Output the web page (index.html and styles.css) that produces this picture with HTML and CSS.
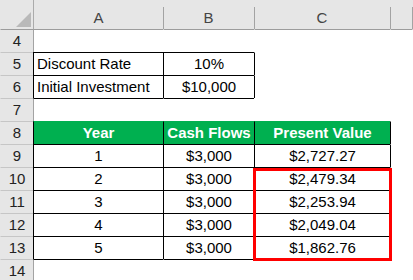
FILE: index.html
```html
<!DOCTYPE html>
<html>
<head>
<meta charset="utf-8">
<link rel="stylesheet" href="styles.css">
</head>
<body>
<div class="sheet">
  <!-- header -->
  <div class="c corner"><svg width="15" height="15" viewBox="0 0 15 15"><polygon points="15,0 15,15 0,15" fill="#b9b9b9"/></svg></div>
  <div class="c hd hd-a">A</div>
  <div class="c hd">B</div>
  <div class="c hd">C</div>
  <div class="c hd"></div>
  <div class="c hd"></div>
  <!-- row 4 -->
  <div class="c rn r4">4</div>
  <div class="c r4 ga"></div>
  <div class="c r4"></div>
  <div class="c r4"></div>
  <div class="c r4"></div>
  <div class="c r4"></div>
  <!-- row 5 -->
  <div class="c rn">5</div>
  <div class="c kt kl lft">Discount Rate</div>
  <div class="c kt kl ctr">10%</div>
  <div class="c kl"></div>
  <div class="c"></div>
  <div class="c"></div>
  <!-- row 6 -->
  <div class="c rn">6</div>
  <div class="c kt kl lft">Initial Investment</div>
  <div class="c kt kl ctr">$10,000</div>
  <div class="c kl"></div>
  <div class="c"></div>
  <div class="c"></div>
  <!-- row 7 -->
  <div class="c rn">7</div>
  <div class="c kt ga"></div>
  <div class="c kt"></div>
  <div class="c"></div>
  <div class="c"></div>
  <div class="c"></div>
  <!-- row 8 -->
  <div class="c rn">8</div>
  <div class="c green kl ctr">Year</div>
  <div class="c green kl ctr">Cash Flows</div>
  <div class="c green kl ctr">Present Value</div>
  <div class="c kl"></div>
  <div class="c"></div>
  <!-- row 9 -->
  <div class="c rn">9</div>
  <div class="c kt kl ctr">1</div>
  <div class="c kt kl ctr">$3,000</div>
  <div class="c kt kl ctr">$2,727.27</div>
  <div class="c kl"></div>
  <div class="c"></div>
  <!-- row 10 -->
  <div class="c rn">10</div>
  <div class="c kt kl ctr">2</div>
  <div class="c kt kl ctr">$3,000</div>
  <div class="c kt kl ctr">$2,479.34</div>
  <div class="c kl"></div>
  <div class="c"></div>
  <!-- row 11 -->
  <div class="c rn">11</div>
  <div class="c kt kl ctr">3</div>
  <div class="c kt kl ctr">$3,000</div>
  <div class="c kt kl ctr">$2,253.94</div>
  <div class="c kl"></div>
  <div class="c"></div>
  <!-- row 12 -->
  <div class="c rn">12</div>
  <div class="c kt kl ctr">4</div>
  <div class="c kt kl ctr">$3,000</div>
  <div class="c kt kl ctr">$2,049.04</div>
  <div class="c kl"></div>
  <div class="c"></div>
  <!-- row 13 -->
  <div class="c rn">13</div>
  <div class="c kt kl ctr">5</div>
  <div class="c kt kl ctr">$3,000</div>
  <div class="c kt kl ctr">$1,862.76</div>
  <div class="c kl"></div>
  <div class="c"></div>
  <!-- row 14 -->
  <div class="c rn">14</div>
  <div class="c kt ga"></div>
  <div class="c kt"></div>
  <div class="c kt"></div>
  <div class="c"></div>
  <div class="c"></div>

  <div class="highlight"></div>
</div>
</body>
</html>
```
FILE: styles.css
```css
html, body {
  margin: 0;
  padding: 0;
  background: #ffffff;
  overflow: hidden;
}

.sheet {
  position: relative;
  display: grid;
  grid-template-columns: 33px 130px 91px 136px 22px 1px;
  grid-template-rows: 29px repeat(11, 23px);
  width: 413px;
  font-family: "Liberation Sans", Arial, sans-serif;
  font-size: 15px;
  color: #000000;
}

.c {
  box-sizing: border-box;
  border-top: 1px solid transparent;
  border-left: 1px solid transparent;
  line-height: 22px;
  white-space: nowrap;
  overflow: hidden;
}

.corner {
  background: #e6e6e6;
  border: none;
  display: flex;
  justify-content: flex-end;
  align-items: flex-end;
  padding: 0 2px 2px 0;
}

.corner svg {
  display: block;
}

.hd {
  border: none;
  background-color: #e6e6e6;
  background-image: linear-gradient(#a3a3a3, #a3a3a3);
  background-repeat: no-repeat;
  background-size: 1px 22px;
  background-position: 0 7px;
  color: #444444;
  display: flex;
  justify-content: center;
  align-items: flex-end;
}

.hd-a {
  background-image: none;
  border-left: 1px solid #ababab;
}

.rn {
  background: #e6e6e6;
  border-top-color: #c6c6c6;
  text-align: center;
  color: #222222;
}

.r4 {
  border-top-color: #9c9c9c;
}

.rn.r4 {
  border-top-color: #9c9c9c;
}

.ga {
  border-left-color: #a3a3a3;
}

.kt {
  border-top-color: #000000;
}

.kl {
  border-left-color: #000000;
}

.green {
  background: #00b050;
  border-top-color: #00b050;
  color: #ffffff;
  font-weight: bold;
}

.ctr {
  text-align: center;
}

.lft {
  padding-left: 3px;
}

.highlight {
  position: absolute;
  left: 253px;
  top: 168px;
  width: 139px;
  height: 93px;
  box-sizing: border-box;
  border: 3px solid #ff0000;
  pointer-events: none;
}
```
